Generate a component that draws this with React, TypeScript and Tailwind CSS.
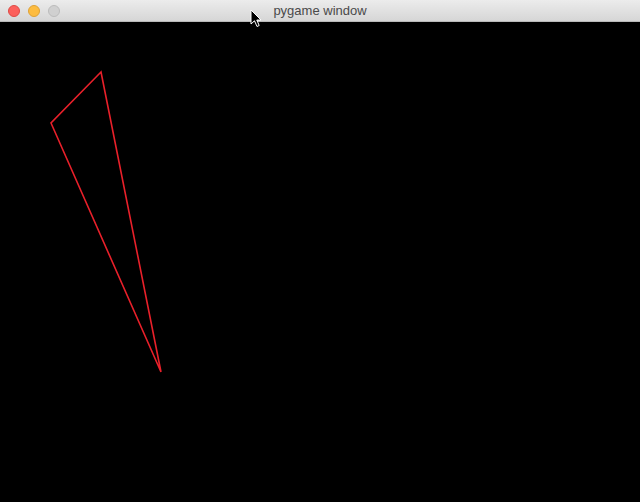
import React from "react";

export default function App() {
  return (
    <div className="w-[640px] h-[502px] flex flex-col bg-black overflow-hidden relative" style={{ fontFamily: '"Helvetica Neue", "Liberation Sans", Arial, sans-serif' }}>
      <div className="h-[22px] flex items-center relative bg-gradient-to-b from-[#ececec] to-[#d6d6d6] border-b border-[#b9b9b9]">
        <div className="flex items-center gap-[8px] pl-[8px]">
          <div className="w-[12px] h-[12px] rounded-full bg-[#fc605c] border border-[#de4a45]" />
          <div className="w-[12px] h-[12px] rounded-full bg-[#fdbc40] border border-[#dea236]" />
          <div className="w-[12px] h-[12px] rounded-full bg-[#d0d0d0] border border-[#bcbcbc]" />
        </div>
        <div className="absolute inset-0 flex items-center justify-center text-[13px] text-[#4a4a4a] pl-[0px]">
          pygame window
        </div>
      </div>
      <div className="flex-1 relative">
        <svg width="640" height="480" className="block">
          <polygon points="101,50 51,101 161,350" fill="none" stroke="#e8202a" strokeWidth="1.6" strokeLinejoin="miter" />
        </svg>
      </div>
      <svg className="absolute left-[250px] top-[9px]" width="12" height="19" viewBox="0 0 12 19">
        <path d="M1 1 L1 15 L4.5 11.8 L7 17.5 L9.2 16.5 L6.8 11 L11 11 Z" fill="#000" stroke="#fff" strokeWidth="1" />
      </svg>
    </div>
  );
}
